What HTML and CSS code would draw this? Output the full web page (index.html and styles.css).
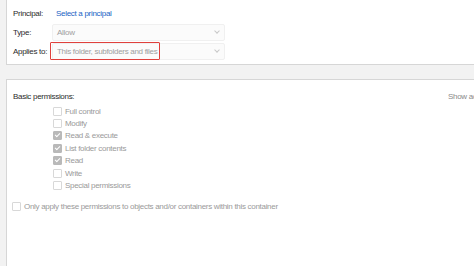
FILE: index.html
```html
<!DOCTYPE html>
<html lang="en">
<head>
  <meta charset="UTF-8" />
  <title>Permission Entry</title>
  <link rel="stylesheet" href="styles.css">
</head>
<body>
  <div class="pane">
    <!-- Principal / type / scope -->
    <section class="card top">
      <div class="row">
        <span class="label">Principal:</span>
        <a class="link" href="#">Select a principal</a>
      </div>
      <div class="row">
        <span class="label">Type:</span>
        <div class="select">Allow<span class="chev"></span></div>
      </div>
      <div class="row">
        <span class="label">Applies to:</span>
        <div class="select highlight">This folder, subfolders and files<span class="chev"></span></div>
      </div>
    </section>

    <!-- Permissions -->
    <section class="card perms">
      <div class="head">
        <span class="label">Basic permissions:</span>
        <span class="show">Show advanced permissions</span>
      </div>
      <ul class="checks">
        <li><span class="box"></span>Full control</li>
        <li><span class="box"></span>Modify</li>
        <li><span class="box on"></span>Read &amp; execute</li>
        <li><span class="box on"></span>List folder contents</li>
        <li><span class="box on"></span>Read</li>
        <li><span class="box"></span>Write</li>
        <li><span class="box"></span>Special permissions</li>
      </ul>
      <div class="only"><span class="box"></span>Only apply these permissions to objects and/or containers within this container</div>
    </section>
  </div>
</body>
</html>
```

FILE: styles.css
```css
body { margin: 0; background: #f2f2f2; font-family: "Liberation Sans", Arial, sans-serif; font-size: 8px; letter-spacing: -0.3px; color: #2b2b2b; overflow: hidden; }
.pane { margin-left: 6px; height: 266px; display: flex; flex-direction: column; gap: 14px; }
.card { background: #fff; border: 1px solid #d6d6d6; border-right: none; overflow: hidden; }
.top { border-top: none; padding: 5px 0 5px 6px; display: flex; flex-direction: column; gap: 3px; overflow: visible; }
.row { display: flex; align-items: center; height: 16px; }
.label { width: 39px; white-space: nowrap; }
.link { color: #1a63c4; text-decoration: none; padding-left: 4px; }
.select { position: relative; width: 167px; height: 15px; padding-left: 4px; line-height: 15px; background: #fbfbfb; border: 1px solid #f0f0f0; border-radius: 2px; color: #a0a0a0; }
.chev { position: absolute; right: 5px; top: 4px; width: 3px; height: 3px; border-right: 1px solid #c8c8c8; border-bottom: 1px solid #c8c8c8; transform: rotate(45deg); }
.highlight::after { content: ""; position: absolute; left: -3px; top: -2px; width: 108px; height: 16px; border: 1.5px solid #e0403c; border-radius: 1px; }
.perms { flex: 1; border-bottom: none; padding: 9px 0 0 6px; }
.head { display: flex; height: 14px; align-items: center; }
.show { color: #8a8a8a; white-space: nowrap; margin-left: auto; width: 26px; overflow: hidden; }
.checks { list-style: none; margin: 2px 0 0; padding: 0 0 0 40px; color: #9a9a9a; }
.checks li { display: flex; align-items: center; height: 12.4px; white-space: nowrap; }
.box { position: relative; display: inline-block; width: 7px; height: 7px; border: 1px solid #d8d8d8; border-radius: 1px; margin-right: 3px; background: #fff; flex: none; }
.box.on { background: #b9b9b9; border-color: #b9b9b9; }
.box.on::after { content: ""; position: absolute; left: 2px; top: 0; width: 2px; height: 4px; border-right: 1px solid #fff; border-bottom: 1px solid #fff; transform: rotate(45deg); }
.only { display: flex; align-items: center; margin-top: 10px; margin-left: -1px; color: #9a9a9a; white-space: nowrap; }
```
